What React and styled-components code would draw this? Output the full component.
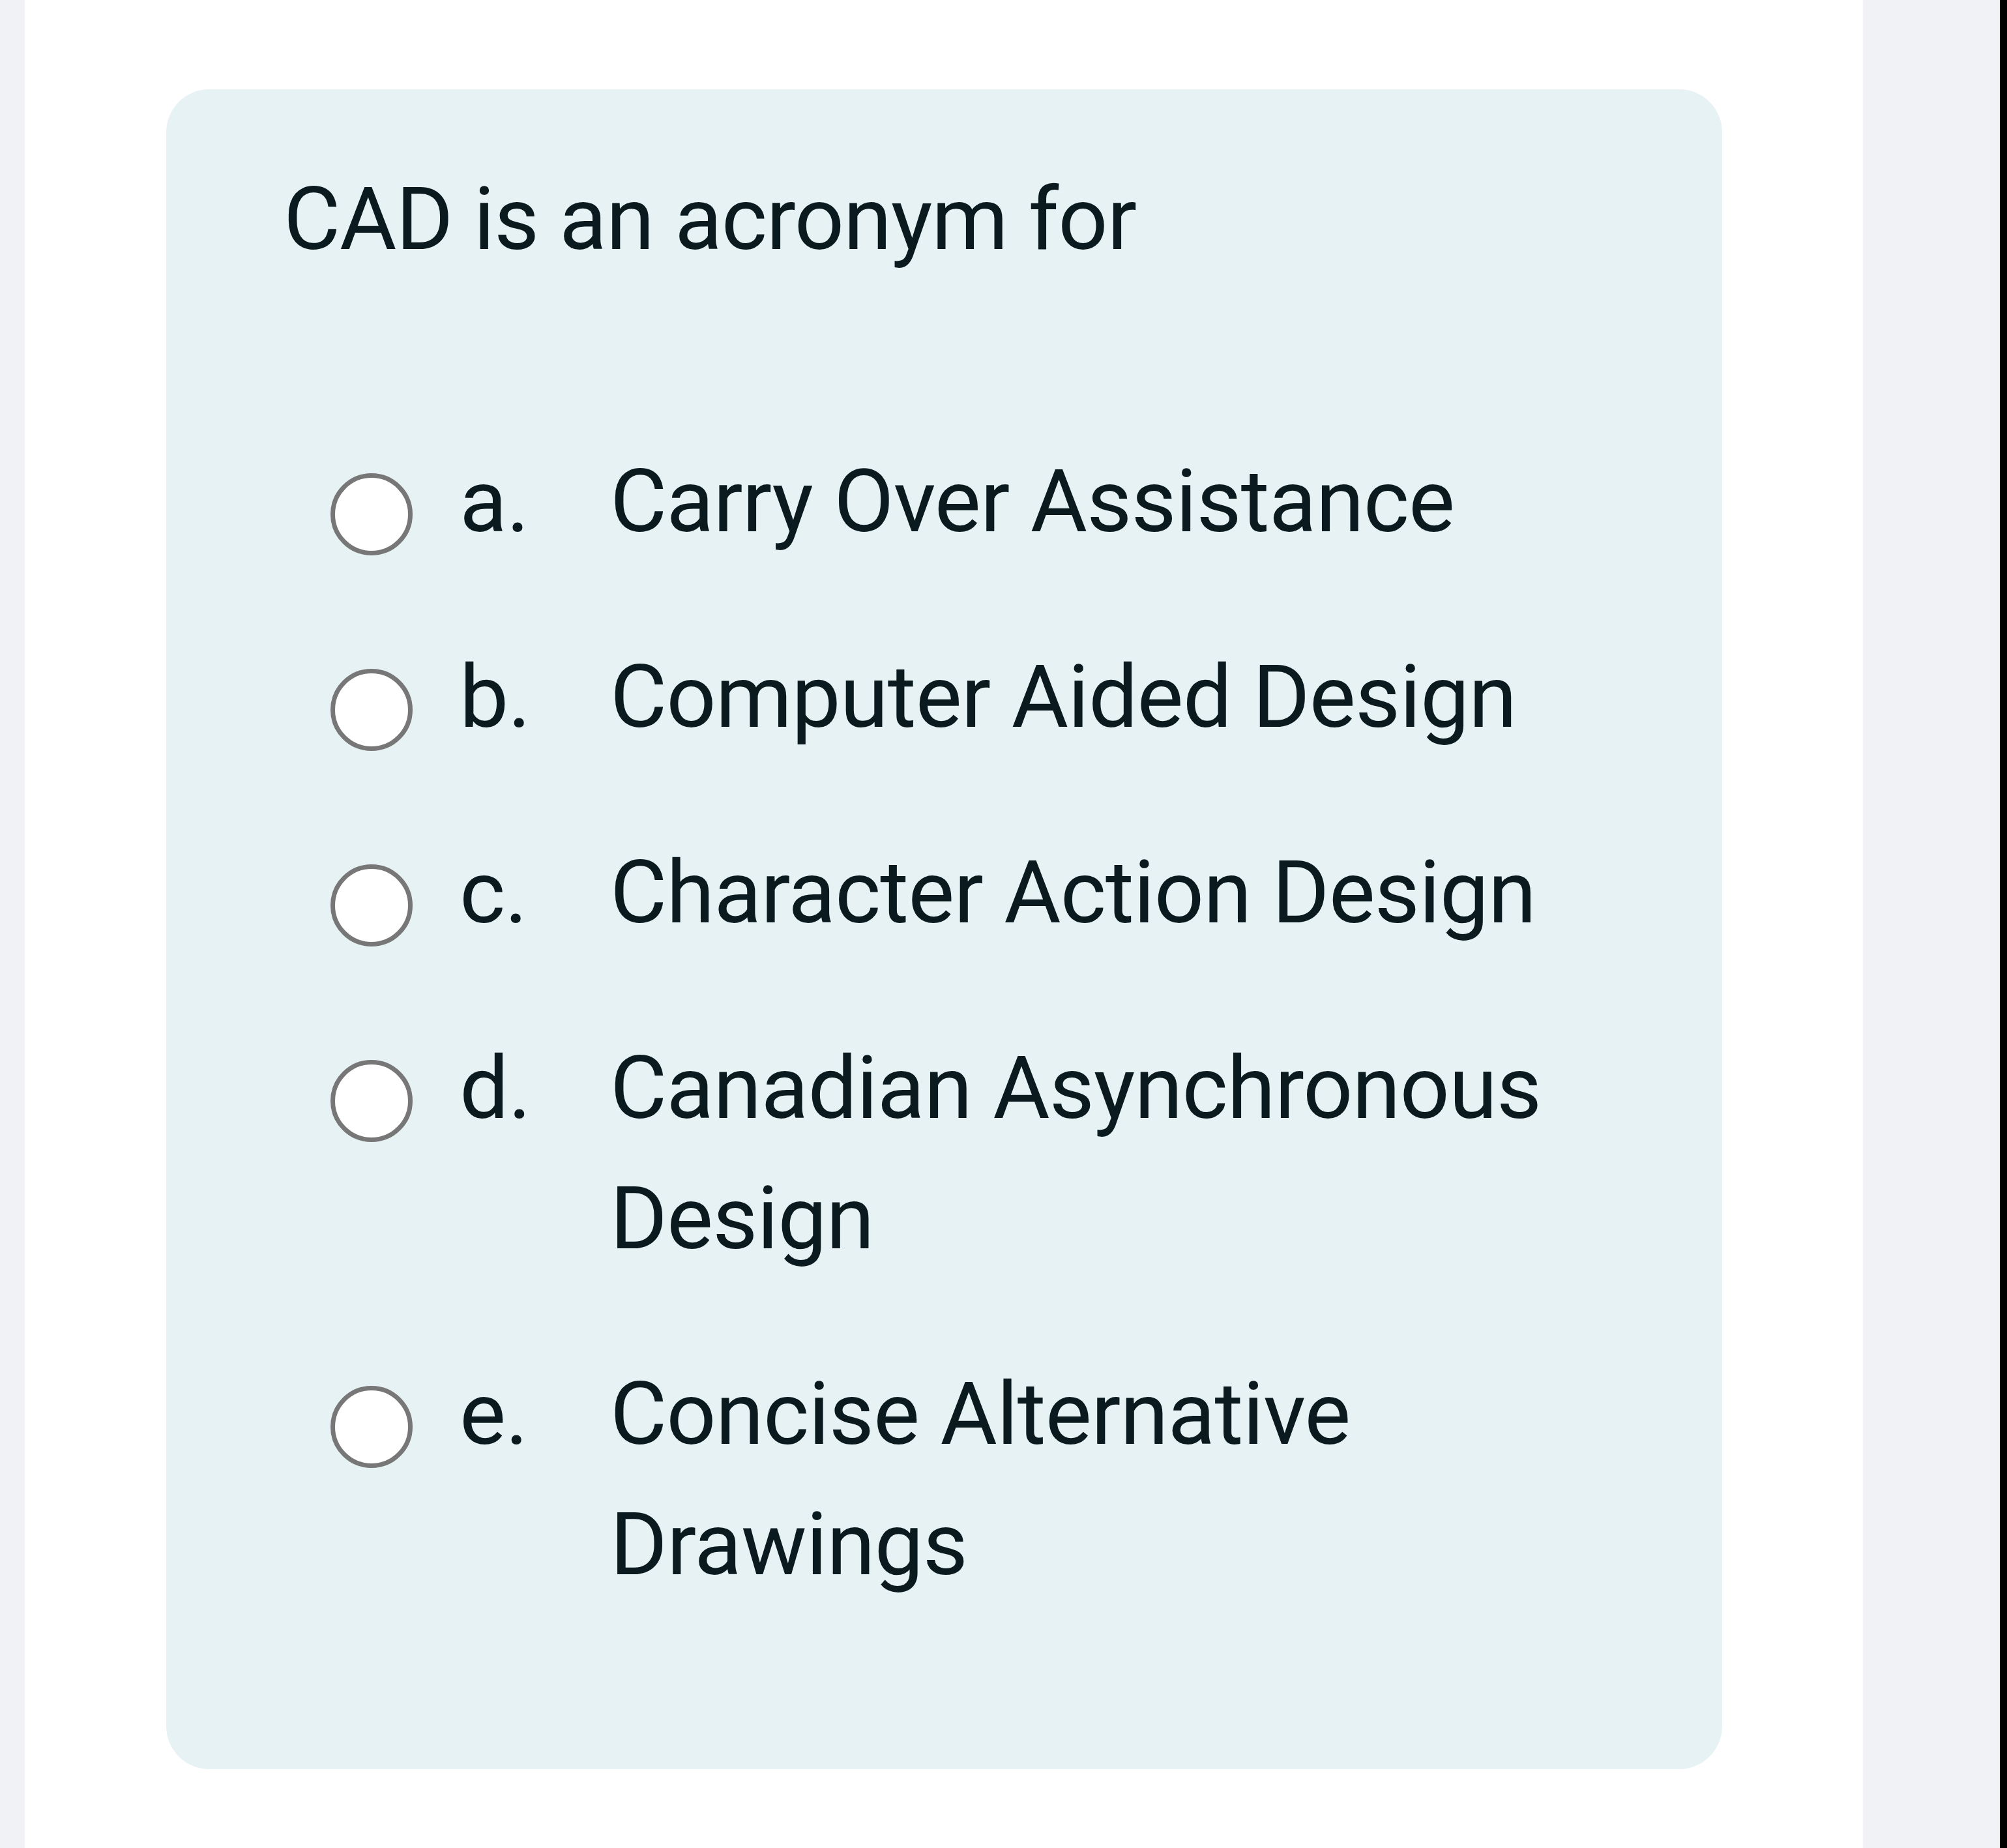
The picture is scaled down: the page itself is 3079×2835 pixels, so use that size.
import styled, { createGlobalStyle } from 'styled-components';

const options = [
  { letter: 'a.', text: 'Carry Over Assistance' },
  { letter: 'b.', text: 'Computer Aided Design' },
  { letter: 'c.', text: 'Character Action Design' },
  { letter: 'd.', text: 'Canadian Asynchronous Design' },
  { letter: 'e.', text: 'Concise Alternative Drawings' },
];

export default function App() {
  return (
    <>
      <GlobalStyle />
      <Page>
        <SideGutter />
        <Main>
          <QuestionCard>
            <QuestionText>CAD is an acronym for</QuestionText>
            <Answers>
              {options.map((o) => (
                <Answer key={o.letter}>
                  <Radio type="radio" name="answer" />
                  <Letter>{o.letter}</Letter>
                  <AnswerText>{o.text}</AnswerText>
                </Answer>
              ))}
            </Answers>
          </QuestionCard>
        </Main>
        <RightGutter />
        <EdgeBar />
      </Page>
    </>
  );
}

const GlobalStyle = createGlobalStyle`
  html, body {
    margin: 0;
    padding: 0;
    background: #f0f2f6;
  }
  body {
    font-family: Roboto, "Liberation Sans", sans-serif;
  }
`;

const Page = styled.div`
  display: flex;
  width: 3079px;
  height: 2835px;
  overflow: hidden;
`;

const SideGutter = styled.div`
  width: 38px;
  flex-shrink: 0;
  background: #f0f2f6;
`;

const RightGutter = styled.div`
  width: 210px;
  flex-shrink: 0;
  background: #f0f2f6;
`;

const EdgeBar = styled.div`
  width: 11px;
  flex-shrink: 0;
  background: #000;
`;

const Main = styled.main`
  width: 2820px;
  flex-shrink: 0;
  background: #ffffff;
  padding: 137px 0 0 217px;
  box-sizing: border-box;
`;

const QuestionCard = styled.section`
  width: 2387px;
  height: 2577px;
  box-sizing: border-box;
  background: #e7f2f4;
  border-radius: 66px;
  padding: 100px 180px 0 180px;
  color: #0a1a1f;
`;

const QuestionText = styled.div`
  font-size: 134px;
  letter-spacing: -1.1px;
  line-height: 200px;
  margin-bottom: 233px;
`;

const Answers = styled.div`
  display: flex;
  flex-direction: column;
  gap: 100px;
  padding-left: 72px;
`;

const Answer = styled.label`
  display: flex;
  align-items: flex-start;
  font-size: 134px;
  letter-spacing: -0.9px;
  line-height: 200px;
`;

const Radio = styled.input`
  appearance: none;
  margin: 56px 0 0 0;
  width: 126px;
  height: 126px;
  flex-shrink: 0;
  border: 7px solid #777777;
  border-radius: 50%;
  background: #ffffff;
  box-sizing: border-box;
`;

const Letter = styled.span`
  width: 231px;
  padding-left: 72px;
  box-sizing: content-box;
  flex-shrink: 0;
`;

const AnswerText = styled.span`
  flex: 1;
`;
